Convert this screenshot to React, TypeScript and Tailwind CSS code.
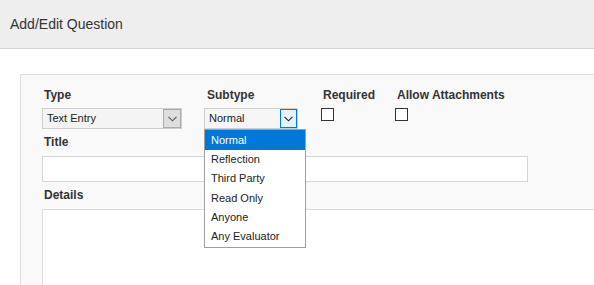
import React from 'react';

const Chevron: React.FC<{ color?: string }> = ({ color = '#555' }) => (
  <svg width="9" height="6" viewBox="0 0 9 6" fill="none">
    <path d="M0.5 0.8 L4.5 4.8 L8.5 0.8" stroke={color} strokeWidth="1.1" />
  </svg>
);

const subtypes = ['Normal', 'Reflection', 'Third Party', 'Read Only', 'Anyone', 'Any Evaluator'];

const Label: React.FC<{ children: React.ReactNode; className?: string }> = ({ children, className = '' }) => (
  <div className={`pl-[2px] text-[12px] font-bold leading-[14px] text-[#333] ${className}`}>{children}</div>
);

export default function App() {
  return (
    <div
      className="w-[594px] h-[285px] overflow-hidden bg-white"
      style={{ fontFamily: '"Liberation Sans", Arial, sans-serif' }}
    >
      <div className="h-[49px] flex items-center px-[10px] bg-[#eeeeee] border-b border-[#d6d6d6]">
        <h1 className="text-[14px] text-[#333] leading-none">Add/Edit Question</h1>
      </div>

      <div className="pt-[25px] pl-[20px]">
        <div className="w-[700px] h-[300px] bg-[#f9f9f9] border-l border-t border-[#dddddd] pl-[21px] pt-[13px]">
          {/* first row */}
          <div className="flex">
            <div className="w-[162px]">
              <Label className="mb-[6px]">Type</Label>
              <div className="w-[140px] h-[21px] flex items-stretch border border-[#cfcfcf] bg-[#f4f4f4]">
                <span className="flex-1 pl-[4px] text-[11px] leading-[19px] text-[#222]">Text Entry</span>
                <span className="w-[18px] flex items-center justify-center bg-[#dedede] border border-[#ababab]">
                  <Chevron />
                </span>
              </div>
            </div>

            <div className="w-[117px] relative">
              <Label className="mb-[6px] pl-[3px]">Subtype</Label>
              <div className="w-[94px] h-[21px] flex items-stretch border border-[#cfcfcf] bg-[#f6f6f6]">
                <span className="flex-1 pl-[4px] text-[11px] leading-[19px] text-[#222]">Normal</span>
                <span className="w-[17px] flex items-center justify-center bg-[#e5f1fb] border border-[#0078d7]">
                  <Chevron color="#222" />
                </span>
              </div>
              <ul className="absolute left-0 top-[41px] z-10 w-[102px] bg-white border border-[#a0a0a0] pb-[1px]">
                {subtypes.map((s, i) => (
                  <li
                    key={s}
                    className={`pl-[6px] text-[11px] ${
                      i === 0 ? 'h-[20px] leading-[20px] bg-[#0078d7] text-white' : 'h-[19.3px] leading-[19.3px] text-[#222]'
                    }`}
                  >
                    {s}
                  </li>
                ))}
              </ul>
            </div>

            <div className="w-[74px]">
              <Label className="mb-[6px]">Required</Label>
              <div className="w-[13px] h-[13px] border border-[#333] bg-white" />
            </div>

            <div>
              <Label className="mb-[6px]">Allow Attachments</Label>
              <div className="w-[13px] h-[13px] border border-[#333] bg-white" />
            </div>
          </div>

          <Label className="mt-[6px] mb-[7px]">Title</Label>
          <div className="w-[486px] h-[26px] bg-white border border-[#d6d6d6]" />

          <Label className="mt-[6px] mb-[7px]">Details</Label>
          <div className="w-[640px] h-[120px] bg-white border border-[#dcdcdc]" />
        </div>
      </div>
    </div>
  );
}
